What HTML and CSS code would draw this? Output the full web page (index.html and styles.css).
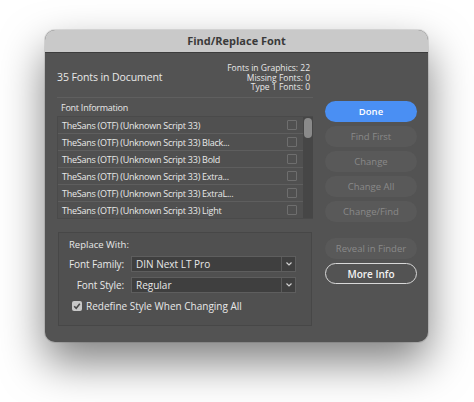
FILE: index.html
```html
<!DOCTYPE html>
<html lang="en">
<head>
    <meta charset="UTF-8">
    <title>Find/Replace Font</title>
    <link rel="stylesheet" href="styles.css">
</head>
<body>
    <div class="window">
        <div class="titlebar">Find/Replace Font</div>
        <div class="content">
            <div class="left">
                <div class="summary">
                    <div class="count">35 Fonts in Document</div>
                    <div class="stats">
                        <div>Fonts in Graphics: 22</div>
                        <div>Missing Fonts: 0</div>
                        <div>Type 1 Fonts: 0</div>
                    </div>
                </div>
                <div class="list-head">Font Information</div>
                <div class="list">
                    <div class="rows">
                        <div class="row"><span>TheSans (OTF) (Unknown Script 33)</span><i class="check"></i></div>
                        <div class="row"><span>TheSans (OTF) (Unknown Script 33) Black...</span><i class="check"></i></div>
                        <div class="row"><span>TheSans (OTF) (Unknown Script 33) Bold</span><i class="check"></i></div>
                        <div class="row"><span>TheSans (OTF) (Unknown Script 33) Extra...</span><i class="check"></i></div>
                        <div class="row"><span>TheSans (OTF) (Unknown Script 33) ExtraL...</span><i class="check"></i></div>
                        <div class="row"><span>TheSans (OTF) (Unknown Script 33) Light</span><i class="check"></i></div>
                    </div>
                    <div class="scrollbar"><div class="thumb"></div></div>
                </div>
                <div class="group">
                    <div class="group-title">Replace With:</div>
                    <div class="field">
                        <label>Font Family:</label>
                        <div class="select"><span>DIN Next LT Pro</span><b class="arrow">
                            <svg width="8" height="6" viewBox="0 0 8 6"><path d="M1.5 1.5 L4 4 L6.5 1.5" fill="none" stroke="#d0d0d0" stroke-width="1.2"/></svg>
                        </b></div>
                    </div>
                    <div class="field">
                        <label>Font Style:</label>
                        <div class="select"><span>Regular</span><b class="arrow">
                            <svg width="8" height="6" viewBox="0 0 8 6"><path d="M1.5 1.5 L4 4 L6.5 1.5" fill="none" stroke="#d0d0d0" stroke-width="1.2"/></svg>
                        </b></div>
                    </div>
                    <div class="option">
                        <span class="tick">
                            <svg width="10" height="10" viewBox="0 0 10 10"><path d="M2.2 5.2 L4.2 7.2 L7.8 2.8" fill="none" stroke="#4a4a4a" stroke-width="1.6"/></svg>
                        </span>
                        Redefine Style When Changing All
                    </div>
                </div>
            </div>
            <div class="right">
                <button class="btn primary">Done</button>
                <button class="btn off">Find First</button>
                <button class="btn off">Change</button>
                <button class="btn off">Change All</button>
                <button class="btn off">Change/Find</button>
                <button class="btn off reveal">Reveal in Finder</button>
                <button class="btn outline">More Info</button>
            </div>
        </div>
    </div>
</body>
</html>
```

FILE: styles.css
```css
html {
    background: #ffffff;
}
body {
    margin: 0;
    min-height: 402px;
    padding-top: 30px;
    box-sizing: border-box;
    font-family: "Open Sans", "DejaVu Sans", sans-serif;
    font-weight: 500;
    color: #e8e8e8;
}
.window {
    margin-left: 45px;
    width: 383px;
    height: 312px;
    border-radius: 10px;
    background: #535353;
    box-shadow: 0 20px 44px rgba(0, 0, 0, 0.5), 0 0 0 1px rgba(0, 0, 0, 0.1);
    overflow: hidden;
}
.titlebar {
    height: 22px;
    line-height: 22px;
    background: #c9c9c9;
    border-bottom: 1px solid #3c3c3c;
    text-align: center;
    font-size: 11px;
    font-weight: 700;
    color: #3a3a3a;
}
.content {
    display: flex;
    padding-left: 12px;
}
.left {
    width: 256px;
}
.summary {
    height: 44px;
    display: flex;
    align-items: center;
    justify-content: space-between;
    border-bottom: 1px solid #5f5f5f;
}
.count {
    font-size: 10.5px;
    margin-top: 4px;
    letter-spacing: -0.1px;
}
.stats {
    text-align: right;
    font-size: 8.5px;
    line-height: 9.5px;
    margin-right: 3px;
    margin-top: 5px;
}
.list-head {
    height: 18px;
    line-height: 19px;
    padding-left: 4px;
    font-size: 9px;
    letter-spacing: -0.25px;
}
.list {
    display: flex;
    border: 1px solid #4a4a4a;
    border-right: none;
}
.rows {
    flex: 1;
}
.row {
    height: 16px;
    border-bottom: 1px solid #5e5e5e;
    background: #505050;
    display: flex;
    align-items: center;
    justify-content: space-between;
    padding-left: 4px;
    font-size: 9px;
    letter-spacing: -0.25px;
}
.row:last-child {
    border-bottom: none;
}
.check {
    width: 8px;
    height: 8px;
    border: 1px solid #6e6e6e;
    border-radius: 1px;
    margin-right: 6px;
}
.scrollbar {
    width: 10px;
    background: #464646;
    padding: 1px;
    box-sizing: border-box;
}
.thumb {
    height: 20px;
    border-radius: 4px;
    background: #8a8a8a;
}
.group {
    margin-top: 13px;
    margin-left: 1px;
    width: 254px;
    height: 94px;
    box-sizing: border-box;
    border: 1px solid #474747;
    background: #505050;
    padding: 5px 0 0 10px;
}
.group-title {
    font-size: 9.5px;
    height: 13px;
}
.field {
    display: flex;
    align-items: center;
    margin-top: 5px;
}
.field label {
    width: 55px;
    text-align: right;
    font-size: 10px;
    margin-right: 7px;
    letter-spacing: -0.1px;
}
.select {
    width: 165px;
    height: 16px;
    box-sizing: border-box;
    border: 1px solid #5e5e5e;
    background: #3f3f3f;
    display: flex;
    align-items: center;
    justify-content: space-between;
    font-size: 10px;
    padding-left: 4px;
}
.arrow {
    width: 13px;
    height: 14px;
    border-left: 1px solid #5a5a5a;
    display: flex;
    align-items: center;
    justify-content: center;
}
.option {
    display: flex;
    align-items: center;
    margin-top: 6px;
    margin-left: 3px;
    font-size: 10px;
}
.tick {
    width: 10px;
    height: 10px;
    border-radius: 2px;
    background: #c8c8c8;
    margin-right: 4px;
    display: flex;
}
.right {
    width: 92px;
    margin-left: 12px;
    padding-top: 48px;
    display: flex;
    flex-direction: column;
    gap: 4px;
}
.btn {
    height: 21px;
    border-radius: 11px;
    border: none;
    font-family: inherit;
    font-size: 9.5px;
    font-weight: 500;
    padding: 0;
}
.primary {
    background: #4a8ff3;
    color: #ffffff;
    font-weight: 600;
}
.off {
    background: #595959;
    color: #898989;
}
.reveal {
    margin-top: 12px;
}
.outline {
    background: transparent;
    border: 1.5px solid #d8d8d8;
    color: #f2f2f2;
    font-weight: 600;
    font-size: 10px;
}
```
